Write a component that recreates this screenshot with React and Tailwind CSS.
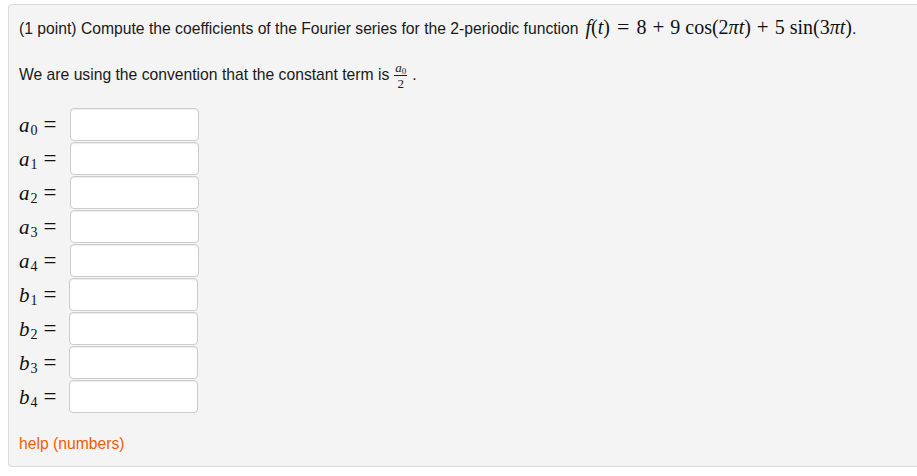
import React from 'react';

const serif = { fontFamily: '"Liberation Serif", "DejaVu Serif", serif' };

function Var({ name, sub }) {
  return (
    <span className="italic" style={serif}>
      {name}
      <span className="not-italic text-[14px] relative top-[3px] ml-[1px]">{sub}</span>
    </span>
  );
}

const rows = [
  ['a', '0'], ['a', '1'], ['a', '2'], ['a', '3'], ['a', '4'],
  ['b', '1'], ['b', '2'], ['b', '3'], ['b', '4'],
];

function Formula() {
  return (
    <span className="text-[20px] ml-[7px] text-[#111]" style={serif}>
      <i>f</i>(<i>t</i>)
      <span className="mx-[7px] text-[22px]">=</span>8
      <span className="mx-[6px] text-[21px]">+</span>9
      <span className="ml-[5px]">cos</span>(2<i>πt</i>)
      <span className="mx-[6px] text-[21px]">+</span>5
      <span className="ml-[5px]">sin</span>(3<i>πt</i>)
    </span>
  );
}

export default function App() {
  return (
    <div className="w-[917px] h-[476px] bg-white pt-[4px] pl-[8px] overflow-hidden" style={{ fontFamily: '"Liberation Sans", Arial, sans-serif' }}>
      <div className="h-[463px] bg-[#f4f4f4] border border-[#dcdcdc] border-r-0 rounded-l-[4px] pl-[10px] pt-[11px] text-[15.7px] text-[#1a1a1a]">
        <p className="h-[22px] leading-[22px] whitespace-nowrap">
          (1 point) Compute the coefficients of the Fourier series for the 2-periodic function
          <Formula />.
        </p>
        <p className="mt-[26px] h-[22px] leading-[22px] flex items-center">
          We are using the convention that the constant term is
          <span className="inline-flex flex-col items-center mx-[5px] leading-none" style={serif}>
            <span className="italic text-[13px] border-b border-[#1a1a1a] px-[1px] pb-[1px]">
              a<span className="not-italic text-[9px] relative top-[2px]">0</span>
            </span>
            <span className="text-[13px] pt-[1px]">2</span>
          </span>
          .
        </p>
        <div className="mt-[22px] flex flex-col gap-[1px]">
          {rows.map(([n, s]) => (
            <div key={n + s} className="flex items-center h-[33px]">
              <span className={`text-[21px] ${n === 'a' ? 'w-[51px]' : 'w-[50px]'} text-[#111] leading-none`}>
                <Var name={n} sub={s} />
                <span className="ml-[6px] text-[23px]" style={serif}>=</span>
              </span>
              <div className="w-[129px] h-[33px] bg-white border border-[#cccccc] rounded-[4px] shadow-[inset_0_1px_1px_rgba(0,0,0,0.075)]" />
            </div>
          ))}
        </div>
        <p className="mt-[19px] text-[#f25c05]">help (numbers)</p>
      </div>
    </div>
  );
}
